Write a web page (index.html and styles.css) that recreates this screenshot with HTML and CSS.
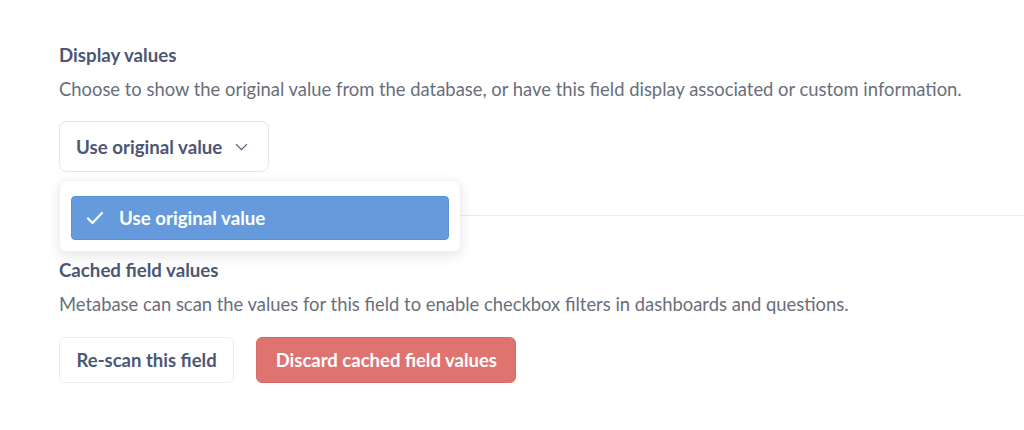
FILE: index.html
```html
<!DOCTYPE html>
<html>
<head>
<meta charset="utf-8">
<link rel="stylesheet" href="styles.css">
</head>
<body>
<div class="page">
  <section class="section">
    <h3 class="title">Display values</h3>
    <p class="desc">Choose to show the original value from the database, or have this field display associated or custom information.</p>
    <div class="select-wrap">
      <button class="select">
        <span>Use original value</span>
        <svg class="chev" width="13" height="8" viewBox="0 0 13 8"><path d="M1 1.2 L6.5 6.7 L12 1.2" fill="none" stroke="#4c5773" stroke-width="1.2"/></svg>
      </button>
      <div class="popover">
        <div class="option">
          <svg class="check" width="18" height="14" viewBox="0 0 18 14"><path d="M2 7.5 L6.5 12 L16 2" fill="none" stroke="#fff" stroke-width="2.2" stroke-linecap="round" stroke-linejoin="round"/></svg>
          <span>Use original value</span>
        </div>
      </div>
    </div>
  </section>
  <hr class="divider">
  <section class="section second">
    <h3 class="title">Cached field values</h3>
    <p class="desc">Metabase can scan the values for this field to enable checkbox filters in dashboards and questions.</p>
    <div class="actions">
      <button class="btn">Re-scan this field</button>
      <button class="btn danger">Discard cached field values</button>
    </div>
  </section>
</div>
</body>
</html>
```

FILE: styles.css
```css
* { box-sizing: border-box; }
html, body { margin: 0; padding: 0; background: #fff; }
body { font-family: Lato, "Noto Sans", sans-serif; color: #4c5773; }
.page { padding: 44px 0 0 59px; }
.section { padding-right: 20px; }
.title { margin: 0; font-size: 18.7px; font-weight: 700; line-height: 22px; color: #4c5773; }
.desc { margin: 12px 0 0; font-size: 18.4px; line-height: 22px; color: #696e7b; white-space: nowrap; }
.select-wrap { position: relative; margin-top: 21px; }
.select {
  display: inline-flex; align-items: center; gap: 13px;
  height: 51px; padding: 0 20px 0 16px;
  border: 1px solid #e4e5ea; border-radius: 8px; background: #fff;
  font-family: inherit; font-size: 18.7px; font-weight: 700; color: #4c5773;
}
.chev { display: block; margin-top: 1px; }
.popover {
  position: absolute; left: 0; top: 59px; width: 402px;
  padding: 15px 11px 11px 11px;
  background: #fff; border-radius: 7px;
  border: 1px solid #f0f0f2;
  box-shadow: 0 4px 14px rgba(0,0,0,0.10);
  z-index: 2;
}
.option {
  display: flex; align-items: center; gap: 15px;
  height: 44px; padding-left: 14px;
  background: #659bdc; border: 1px solid #5a92d8; border-radius: 4px;
  color: #fff; font-size: 18.7px; font-weight: 700;
}
.divider { margin: 43px 0 0 0; border: 0; border-top: 1px solid #e9eaee; }
.second { padding-top: 43px; }
.actions { display: flex; gap: 22px; margin-top: 22px; }
.btn {
  height: 46px; padding: 0 16.5px;
  border: 1px solid #eceaee; border-radius: 6px; background: #fff;
  font-family: inherit; font-size: 18.5px; font-weight: 700; color: #4c5773;
}
.btn.danger { padding: 0 18.5px; background: #df7370; border-color: #d96c69; color: #fff; }
```
